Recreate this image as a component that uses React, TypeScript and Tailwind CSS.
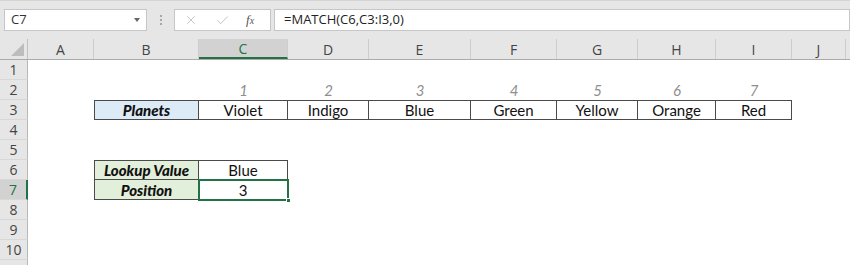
import { X, Check } from 'lucide-react';

const cols = [
  { key: 'A', w: 'w-[66px]' },
  { key: 'B', w: 'w-[105px]' },
  { key: 'C', w: 'w-[89px]' },
  { key: 'D', w: 'w-[81px]' },
  { key: 'E', w: 'w-[102px]' },
  { key: 'F', w: 'w-[86px]' },
  { key: 'G', w: 'w-[81px]' },
  { key: 'H', w: 'w-[78px]' },
  { key: 'I', w: 'w-[76px]' },
  { key: 'J', w: 'w-[54px]' },
];

const planets = ['Violet', 'Indigo', 'Blue', 'Green', 'Yellow', 'Orange', 'Red'];

const cellFont = { fontFamily: 'Lato, "Liberation Sans", sans-serif' };
const uiFont = { fontFamily: '"Open Sans", "Noto Sans", sans-serif' };

type Cell = { text?: string; cls?: string };

function rowCells(row: number): Record<string, Cell> {
  const out: Record<string, Cell> = {};
  const letters = ['C', 'D', 'E', 'F', 'G', 'H', 'I'];
  if (row === 2) {
    letters.forEach((l, i) => {
      out[l] = { text: String(i + 1), cls: 'italic text-[#8f8f8f]' };
    });
  }
  if (row === 3) {
    out.B = {
      text: 'Planets',
      cls: 'font-black italic text-[#111] bg-[#ddebf7] border-y border-x border-[#4a4a4a]',
    };
    letters.forEach((l, i) => {
      out[l] = { text: planets[i], cls: 'text-[#111] border-y border-r border-[#4a4a4a]' };
    });
  }
  if (row === 6) {
    out.B = { text: 'Lookup Value', cls: 'font-black italic text-[#111] bg-[#e2efda] border-y border-x border-[#4a4a4a]' };
    out.C = { text: 'Blue', cls: 'text-[#111] border-y border-r border-[#4a4a4a]' };
  }
  if (row === 7) {
    out.B = { text: 'Position', cls: 'font-black italic text-[#111] bg-[#e2efda] border-b border-x border-[#4a4a4a]' };
    out.C = { text: '3', cls: 'text-[#111] border-b border-r border-[#4a4a4a]' };
  }
  return out;
}

export default function App() {
  const rows = [1, 2, 3, 4, 5, 6, 7, 8, 9, 10, 11];

  return (
    <div className="w-[850px] h-[265px] overflow-hidden bg-white text-[#222]" style={uiFont}>
      {/* Formula bar */}
      <div className="h-[39px] bg-[#e6e6e6] border-t border-[#d4d4d4] flex items-start pt-[8px] pl-[4px]">
        <div className="w-[143px] h-[22px] bg-white border border-[#c6c6c6] flex items-center justify-between pl-[6px] pr-[6px]">
          <span className="text-[13px] text-[#333]">C7</span>
          <span className="w-0 h-0 border-x-[3px] border-x-transparent border-t-[4px] border-t-[#666]" />
        </div>
        <div className="w-[27px] h-[22px] flex flex-col items-center justify-center gap-[2px]">
          <span className="w-[2px] h-[2px] bg-[#a8a8a8]" />
          <span className="w-[2px] h-[2px] bg-[#a8a8a8]" />
          <span className="w-[2px] h-[2px] bg-[#a8a8a8]" />
        </div>
        <div className="w-[97px] h-[22px] bg-white border border-[#c6c6c6] flex items-center">
          <X size={14} strokeWidth={1.3} className="ml-[9px] text-[#b5b5b5]" />
          <Check size={15} strokeWidth={1.3} className="ml-[17px] text-[#b5b5b5]" />
          <span className="ml-[16px] text-[13px] italic text-[#555]" style={{ fontFamily: '"Liberation Serif", serif' }}>
            f<span className="text-[10px]">x</span>
          </span>
        </div>
        <div className="flex-1 h-[22px] ml-[3px] bg-white border border-[#c6c6c6] flex items-center pl-[9px]">
          <span className="text-[13px] text-[#222]">=MATCH(C6,C3:I3,0)</span>
        </div>
      </div>

      {/* Column headers */}
      <div className="flex h-[21px] bg-[#e6e6e6] border-b border-[#ababab]">
        <div className="w-[28px] shrink-0 border-r border-[#c0c0c0] relative">
          <span className="absolute right-[3px] bottom-[3px] w-0 h-0 border-l-[13px] border-l-transparent border-b-[13px] border-b-[#bdbdbd]" />
        </div>
        {cols.map((c) => (
          <div
            key={c.key}
            className={`${c.w} shrink-0 flex items-center justify-center text-[14px] border-r border-[#cdcdcd] ${
              c.key === 'C' ? 'bg-[#d2d2d2] text-[#217346] border-b-2 border-b-[#217346]' : 'text-[#444]'
            }`}
          >
            {c.key}
          </div>
        ))}
        <div className="flex-1" />
      </div>

      {/* Rows */}
      <div className="relative">
        {rows.map((r) => {
          const cells = rowCells(r);
          return (
            <div key={r} className="flex h-[20px]">
              <div
                className={`w-[28px] shrink-0 flex items-center justify-center text-[14px] border-b border-[#d8d8d8] ${
                  r === 7
                    ? 'bg-[#d2d2d2] text-[#217346] border-r-2 border-r-[#217346]'
                    : 'bg-[#e6e6e6] text-[#444] border-r border-r-[#b8b8b8]'
                }`}
              >
                {r}
              </div>
              {cols.map((c) => {
                const cell = cells[c.key];
                return (
                  <div
                    key={c.key}
                    className={`${c.w} shrink-0 flex items-center justify-center pt-[1px] text-[15px] ${cell?.cls ?? ''}`}
                    style={cellFont}
                  >
                    {cell?.text}
                  </div>
                );
              })}
              <div className="flex-1" />
            </div>
          );
        })}
        {/* Active cell selection C7 */}
        <div className="absolute left-[198px] top-[119px] w-[91px] h-[22px] border-2 border-[#217346] pointer-events-none">
          <span className="absolute -right-[4px] -bottom-[4px] w-[5px] h-[5px] bg-[#217346] border border-white" />
        </div>
      </div>
    </div>
  );
}
